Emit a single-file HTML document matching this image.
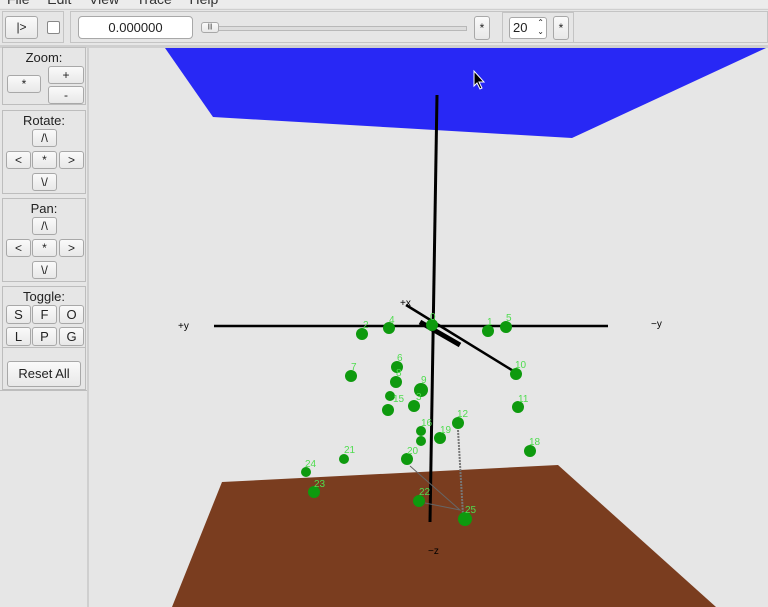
<!DOCTYPE html>
<html><head><style>
body{margin:0;width:768px;height:607px;overflow:hidden;background:#e6e6e6;font-family:"Liberation Sans",sans-serif;position:relative}
.a{position:absolute}
.btn{position:absolute;background:linear-gradient(#fafafa,#e8e8e8);border:1px solid #a8a8a8;border-radius:3px;font-size:12px;text-align:center;box-sizing:border-box;color:#222}
.grp{position:absolute;left:2px;width:84px;border:1px solid #bdbdbd;box-sizing:border-box}
.lbl{position:absolute;width:100%;text-align:center;font-size:13px;color:#222}
</style></head><body>
<div class="a" style="left:0;top:0;width:768px;height:8px;background:#ececec;overflow:hidden"><div style="position:absolute;top:-9px;left:7px;font-size:14px;line-height:16px;color:#333;white-space:pre;word-spacing:2px">File   Edit   View   Trace   Help</div></div>
<div class="a" style="left:0;top:9px;width:768px;height:1px;background:#cfcfcf"></div>
<div class="a" style="left:2px;top:11px;width:62px;height:32px;border:1px solid #c4c4c4;box-sizing:border-box"></div>
<div class="btn" style="left:5px;top:16px;width:33px;height:23px;line-height:21px">|&gt;</div>
<div class="a" style="left:47px;top:21px;width:11px;height:11px;border:1px solid #888;background:#fff;border-radius:2px"></div>
<div class="a" style="left:70px;top:11px;width:698px;height:32px;border:1px solid #c4c4c4;box-sizing:border-box"></div>
<div class="btn" style="left:78px;top:16px;width:115px;height:23px;line-height:21px;background:#fff;font-size:13px;border-radius:4px">0.000000</div>
<div class="a" style="left:210px;top:26px;width:255px;height:3px;background:#ddd;border:1px solid #b8b8b8"></div>
<div class="btn" style="left:201px;top:22px;width:18px;height:11px;font-size:6px;line-height:9px">|||</div>
<div class="btn" style="left:474px;top:16px;width:16px;height:24px;line-height:22px">*</div>
<div class="a" style="left:502px;top:12px;width:72px;height:31px;border:1px solid #c4c4c4;box-sizing:border-box"></div>
<div class="btn" style="left:509px;top:17px;width:38px;height:22px;background:#fff;text-align:left;padding-left:3px;line-height:20px;font-size:13px">20<span style="position:absolute;right:2px;top:0;font-size:8px;line-height:9px">⌃<br>⌄</span></div>
<div class="btn" style="left:553px;top:16px;width:16px;height:24px;line-height:22px">*</div>
<div class="a" style="left:0;top:45px;width:768px;height:3px;background:#cfcfcf"></div>
<div class="a" style="left:87px;top:48px;width:2px;height:559px;background:#cfcfcf"></div>

<div class="grp" style="top:47px;height:58px"><div class="lbl" style="top:2px">Zoom:</div>
<div class="btn" style="left:4px;top:27px;width:34px;height:18px;line-height:16px">*</div>
<div class="btn" style="left:45px;top:18px;width:36px;height:18px;line-height:16px">+</div>
<div class="btn" style="left:45px;top:38px;width:36px;height:18px;line-height:16px">-</div></div>
<div class="grp" style="top:110px;height:84px"><div class="lbl" style="top:2px">Rotate:</div>
<div class="btn" style="left:29px;top:18px;width:25px;height:18px;line-height:16px">/\</div>
<div class="btn" style="left:3px;top:40px;width:25px;height:18px;line-height:16px">&lt;</div>
<div class="btn" style="left:29px;top:40px;width:25px;height:18px;line-height:16px">*</div>
<div class="btn" style="left:56px;top:40px;width:25px;height:18px;line-height:16px">&gt;</div>
<div class="btn" style="left:29px;top:62px;width:25px;height:18px;line-height:16px">\/</div></div>
<div class="grp" style="top:198px;height:84px"><div class="lbl" style="top:2px">Pan:</div>
<div class="btn" style="left:29px;top:18px;width:25px;height:18px;line-height:16px">/\</div>
<div class="btn" style="left:3px;top:40px;width:25px;height:18px;line-height:16px">&lt;</div>
<div class="btn" style="left:29px;top:40px;width:25px;height:18px;line-height:16px">*</div>
<div class="btn" style="left:56px;top:40px;width:25px;height:18px;line-height:16px">&gt;</div>
<div class="btn" style="left:29px;top:62px;width:25px;height:18px;line-height:16px">\/</div></div>
<div class="grp" style="top:286px;height:62px"><div class="lbl" style="top:2px">Toggle:</div>
<div class="btn" style="left:3px;top:18px;width:25px;height:19px;line-height:17px;font-size:13px">S</div>
<div class="btn" style="left:29px;top:18px;width:25px;height:19px;line-height:17px;font-size:13px">F</div>
<div class="btn" style="left:56px;top:18px;width:25px;height:19px;line-height:17px;font-size:13px">O</div>
<div class="btn" style="left:3px;top:40px;width:25px;height:19px;line-height:17px;font-size:13px">L</div>
<div class="btn" style="left:29px;top:40px;width:25px;height:19px;line-height:17px;font-size:13px">P</div>
<div class="btn" style="left:56px;top:40px;width:25px;height:19px;line-height:17px;font-size:13px">G</div></div>
<div class="grp" style="top:348px;height:42px;border-top:none"></div>
<div class="btn" style="left:7px;top:361px;width:74px;height:26px;line-height:24px;font-size:13px">Reset All</div>
<div class="a" style="left:0;top:390px;width:87px;height:1px;background:#bdbdbd"></div>

<svg class="a" style="left:0;top:0" width="768" height="607" font-family="Liberation Sans" font-size="10">
<polygon points="165,48 766,48 572,138 213,117" fill="#2828f5"/>
<polygon points="222,482 558,465 716,607 172,607" fill="#7a3d1f"/>
<line x1="214" y1="326" x2="608" y2="326" stroke="#000" stroke-width="2.5"/>
<line x1="437" y1="95" x2="430" y2="522" stroke="#000" stroke-width="3"/>
<line x1="406" y1="305" x2="515" y2="372" stroke="#000" stroke-width="2.5"/>
<line x1="420" y1="322" x2="460" y2="345" stroke="#000" stroke-width="5"/>
<line x1="458" y1="430" x2="463" y2="515" stroke="#777" stroke-dasharray="2,1" stroke-width="2"/>
<polyline points="410,466 460,510 425,503" fill="none" stroke="#666" stroke-width="1"/>
<g fill="#000"><text x="178" y="329">+y</text><text x="651" y="327">−y</text><text x="400" y="306">+x</text><text x="428" y="554">−z</text></g>
<g fill="#0e9a0e">
<circle cx="362" cy="334" r="6"/><circle cx="389" cy="328" r="6"/><circle cx="432" cy="325" r="6"/><circle cx="488" cy="331" r="6"/><circle cx="506" cy="327" r="6"/><circle cx="351" cy="376" r="6"/><circle cx="397" cy="367" r="6"/><circle cx="396" cy="382" r="6"/><circle cx="421" cy="390" r="7"/><circle cx="390" cy="396" r="5"/><circle cx="388" cy="410" r="6"/><circle cx="414" cy="406" r="6"/><circle cx="516" cy="374" r="6"/><circle cx="518" cy="407" r="6"/><circle cx="458" cy="423" r="6"/><circle cx="421" cy="431" r="5"/><circle cx="421" cy="441" r="5"/><circle cx="440" cy="438" r="6"/><circle cx="530" cy="451" r="6"/><circle cx="344" cy="459" r="5"/><circle cx="407" cy="459" r="6"/><circle cx="306" cy="472" r="5"/><circle cx="314" cy="492" r="6"/><circle cx="419" cy="501" r="6"/><circle cx="465" cy="519" r="7"/></g>
<g fill="#4fdc4f"><text x="363" y="328">2</text><text x="389" y="323">4</text><text x="430" y="320">0</text><text x="487" y="325">1</text><text x="506" y="321">5</text><text x="351" y="370">7</text><text x="397" y="361">6</text><text x="396" y="376">8</text><text x="421" y="383">9</text><text x="393" y="402">15</text><text x="416" y="400">3</text><text x="515" y="368">10</text><text x="518" y="402">11</text><text x="457" y="417">12</text><text x="421" y="426">16</text><text x="440" y="433">19</text><text x="529" y="445">18</text><text x="344" y="453">21</text><text x="407" y="454">20</text><text x="305" y="467">24</text><text x="314" y="487">23</text><text x="419" y="495">22</text><text x="465" y="513">25</text></g>
<path d="M474,71 L474,86 L477,83 L480,89 L482,88 L479,82 L484,82 Z" fill="#000" stroke="#fff" stroke-width="1"/>
</svg>
</body></html>
